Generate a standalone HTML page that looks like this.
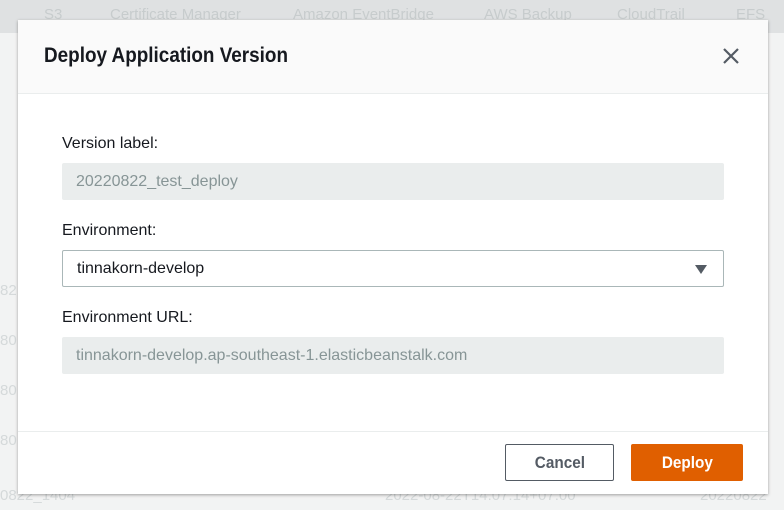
<!DOCTYPE html>
<html><head><meta charset="utf-8"><style>
body{margin:0;width:784px;height:510px;overflow:hidden;background:#f2f3f3;font-family:"Liberation Sans",sans-serif;position:relative}
.top{position:absolute;left:0;top:0;width:784px;height:33px;background:#dfe1e2}
.top span{position:absolute;top:6px;font-size:15px;color:#c7cccd}
.bgt{position:absolute;font-size:15px;color:#d5d9da}
.modal{position:absolute;left:18px;top:20px;width:750px;height:474px;background:#fff;box-shadow:0 1px 3px rgba(0,0,0,.35)}
.hd{height:73px;background:#fafafa;border-bottom:1px solid #eaeded;position:relative}
.hd h1{margin:0;position:absolute;left:26px;top:24px;font-size:21px;font-weight:bold;color:#16191f;transform:scaleX(.9);transform-origin:left}
.x{position:absolute;left:704px;top:27px}
.lbl{position:absolute;left:44px;font-size:16px;color:#16191f}
.in{position:absolute;left:44px;width:662px;height:37px;border-radius:2px;box-sizing:border-box;font-size:16px;line-height:37px;padding-left:14px}
.dis{background:#eaeded;color:#879596}
.sel{border:1px solid #aab7b8;color:#16191f;line-height:35px}
.ft{position:absolute;left:0;top:411px;width:750px;border-top:1px solid #eaeded}
.btn{position:absolute;top:424px;height:37px;box-sizing:border-box;border-radius:2px;font-size:17px;font-weight:bold;text-align:center;line-height:35px}
.btn span{display:inline-block;transform:scaleX(.9)}
</style></head><body>
<div class="top">
<span style="left:44px">S3</span><span style="left:110px">Certificate Manager</span><span style="left:293px">Amazon EventBridge</span><span style="left:484px">AWS Backup</span><span style="left:617px">CloudTrail</span><span style="left:736px">EFS</span>
</div>
<div class="bgt" style="left:0;top:282px">82</div>
<div class="bgt" style="left:0;top:332px">80</div>
<div class="bgt" style="left:0;top:382px">80</div>
<div class="bgt" style="left:0;top:432px">80</div>
<div class="bgt" style="left:0;top:487px">0822_1404</div>
<div class="bgt" style="left:385px;top:487px">2022-08-22T14:07:14+07:00</div>
<div class="bgt" style="left:700px;top:487px">20220822</div>
<div class="modal">
<div class="hd"><h1>Deploy Application Version</h1>
<svg class="x" width="18" height="18" viewBox="0 0 18 18"><path d="M2 2L16 16M16 2L2 16" stroke="#545b64" stroke-width="2.2"/></svg></div>
<div class="lbl" style="top:115px">Version label:</div>
<div class="in dis" style="top:143px">20220822_test_deploy</div>
<div class="lbl" style="top:202px">Environment:</div>
<div class="in sel" style="top:230px">tinnakorn-develop
<svg style="position:absolute;right:16px;top:14px" width="12" height="9" viewBox="0 0 12 9"><path d="M0 0H12L6 9Z" fill="#545b64"/></svg></div>
<div class="lbl" style="top:289px">Environment URL:</div>
<div class="in dis" style="top:317px">tinnakorn-develop.ap-southeast-1.elasticbeanstalk.com</div>
<div class="ft"></div>
<div class="btn" style="left:487px;width:109px;border:1px solid #545b64;color:#545b64"><span>Cancel</span></div>
<div class="btn" style="left:613px;width:112px;background:#e05f00;color:#fff;border:1px solid #e05f00"><span>Deploy</span></div>
</div>
</body></html>
